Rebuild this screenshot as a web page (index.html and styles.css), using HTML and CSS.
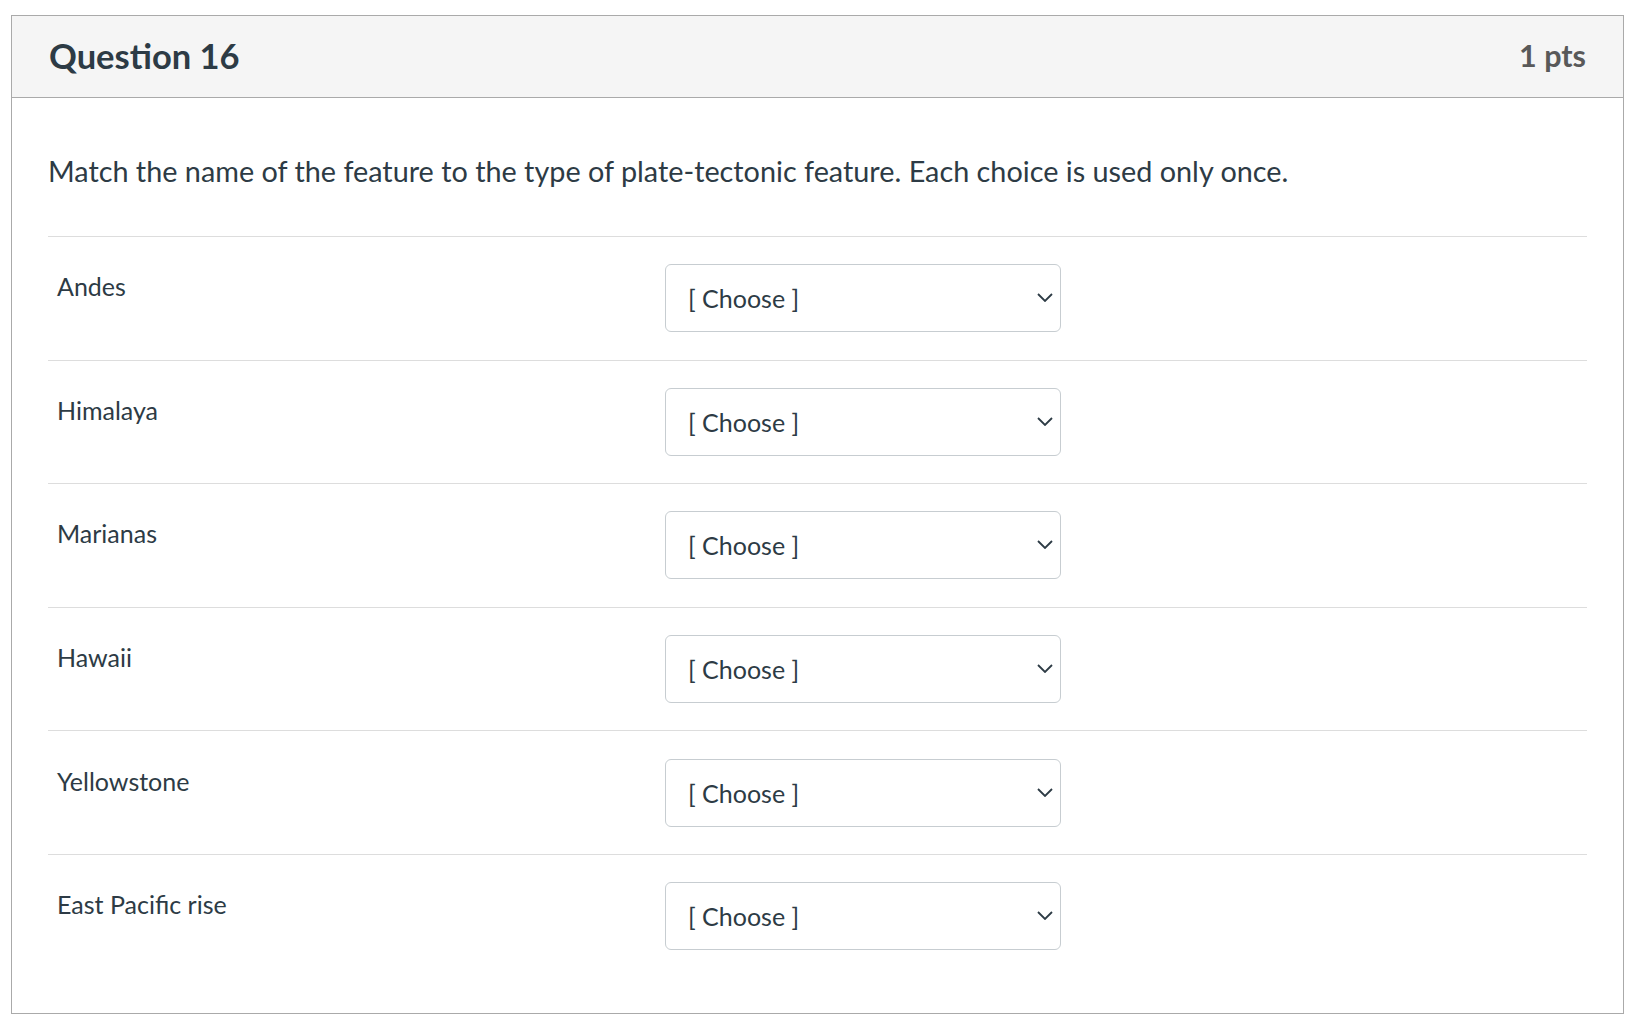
FILE: index.html
```html
<!DOCTYPE html>
<html lang="en">
<head>
  <meta charset="UTF-8" />
  <meta name="viewport" content="width=device-width, initial-scale=1.0"/>
  <title>Question 16</title>
  <link rel="stylesheet" href="styles.css">
</head>
<body>
  <div class="question">
    <div class="question-header">
      <h2 class="question-title">Question 16</h2>
      <span class="question-points">1 pts</span>
    </div>

    <div class="question-body">
      <p class="question-text">Match the name of the feature to the type of plate-tectonic feature. Each choice is used only once.</p>

      <div class="answers">
        <div class="answer-row">
          <div class="answer-label">Andes</div>
          <div class="select-wrap">
            <select class="answer-select"><option>[ Choose ]</option></select>
            <svg class="chevron" width="16" height="9" viewBox="0 0 16 9"><path d="M1 1 L8 8 L15 1" fill="none" stroke="#2d3b45" stroke-width="1.8"/></svg>
          </div>
        </div>
        <div class="answer-row">
          <div class="answer-label">Himalaya</div>
          <div class="select-wrap">
            <select class="answer-select"><option>[ Choose ]</option></select>
            <svg class="chevron" width="16" height="9" viewBox="0 0 16 9"><path d="M1 1 L8 8 L15 1" fill="none" stroke="#2d3b45" stroke-width="1.8"/></svg>
          </div>
        </div>
        <div class="answer-row">
          <div class="answer-label">Marianas</div>
          <div class="select-wrap">
            <select class="answer-select"><option>[ Choose ]</option></select>
            <svg class="chevron" width="16" height="9" viewBox="0 0 16 9"><path d="M1 1 L8 8 L15 1" fill="none" stroke="#2d3b45" stroke-width="1.8"/></svg>
          </div>
        </div>
        <div class="answer-row">
          <div class="answer-label">Hawaii</div>
          <div class="select-wrap">
            <select class="answer-select"><option>[ Choose ]</option></select>
            <svg class="chevron" width="16" height="9" viewBox="0 0 16 9"><path d="M1 1 L8 8 L15 1" fill="none" stroke="#2d3b45" stroke-width="1.8"/></svg>
          </div>
        </div>
        <div class="answer-row">
          <div class="answer-label">Yellowstone</div>
          <div class="select-wrap">
            <select class="answer-select"><option>[ Choose ]</option></select>
            <svg class="chevron" width="16" height="9" viewBox="0 0 16 9"><path d="M1 1 L8 8 L15 1" fill="none" stroke="#2d3b45" stroke-width="1.8"/></svg>
          </div>
        </div>
        <div class="answer-row">
          <div class="answer-label">East Pacific rise</div>
          <div class="select-wrap">
            <select class="answer-select"><option>[ Choose ]</option></select>
            <svg class="chevron" width="16" height="9" viewBox="0 0 16 9"><path d="M1 1 L8 8 L15 1" fill="none" stroke="#2d3b45" stroke-width="1.8"/></svg>
          </div>
        </div>
      </div>
    </div>
  </div>
</body>
</html>
```

FILE: styles.css
```css
* {
  box-sizing: border-box;
}

body {
  margin: 0;
  padding: 0;
  font-family: Lato, "Open Sans", sans-serif;
  color: #2d3b45;
  background: #fff;
}

.question {
  margin: 15px 6px 0 11px;
  border: 1px solid #aaaaaa;
}

.question-header {
  display: flex;
  justify-content: space-between;
  align-items: center;
  height: 82px;
  padding: 0 37px 3px;
  background: #f5f5f5;
  border-bottom: 1px solid #aaaaaa;
}

.question-title {
  margin: 0;
  font-size: 34.5px;
  font-weight: bold;
  color: #2d3b45;
}

.question-points {
  font-size: 30.5px;
  font-weight: bold;
  color: #595959;
}

.question-body {
  padding: 0 36px 35px;
}

.question-text {
  margin: 0;
  padding: 54px 0 46px;
  font-size: 28.8px;
  line-height: 38px;
}

.answer-row {
  display: flex;
  align-items: flex-start;
  padding: 27.3px 0;
  border-top: 1px solid #dddddd;
}

.answer-label {
  width: 617px;
  padding: 4px 0 0 9px;
  font-size: 25px;
  line-height: 37px;
}

.select-wrap {
  position: relative;
  width: 396px;
  height: 68px;
}

.answer-select {
  width: 100%;
  height: 100%;
  padding: 0 40px 0 22px;
  font-family: Lato, "Open Sans", sans-serif;
  font-size: 25px;
  color: #2d3b45;
  background: #fff;
  border: 1px solid #c7cdd1;
  border-radius: 6px;
  appearance: none;
  -webkit-appearance: none;
}

.chevron {
  position: absolute;
  top: 29px;
  right: 8px;
  pointer-events: none;
}
```
